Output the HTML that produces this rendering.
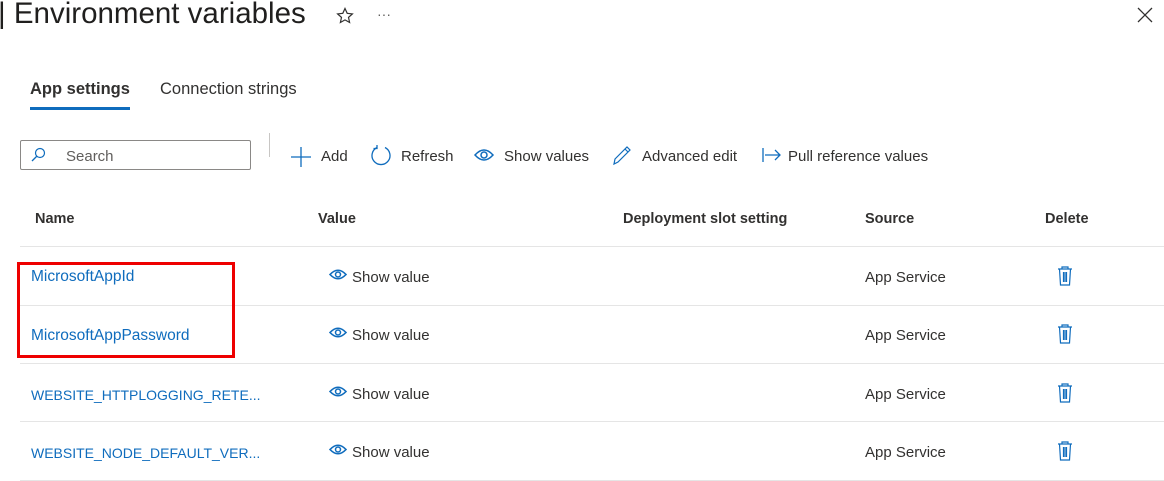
<!DOCTYPE html>
<html><head><meta charset="utf-8"><style>
*{margin:0;padding:0;box-sizing:border-box}
body{width:1164px;height:481px;background:#fff;font-family:"Liberation Sans",sans-serif;color:#323130;position:relative;overflow:hidden;font-size:15px}
.a{position:absolute;white-space:nowrap}
.line{position:absolute;left:20px;width:1144px;height:1px;background:#e5e5e5}
.lnk{color:#0f6cbd;font-size:14px}
.th{font-weight:bold;font-size:14.5px;color:#323130}
svg{position:absolute}
</style></head><body>
<div class="a" style="left:-2px;top:-3px;font-size:29.5px;color:#201f1e">| Environment variables</div>
<svg style="left:336px;top:7px" width="18" height="18" viewBox="0 0 18 18"><path d="M9 1.5l2.2 4.8 5.2.6-3.9 3.5 1.1 5.1L9 12.9 4.4 15.5l1.1-5.1L1.6 6.9l5.2-.6z" fill="none" stroke="#323130" stroke-width="1.2"/></svg>
<div class="a" style="left:377px;top:6px;font-size:14px;color:#605e5c">···</div>
<svg style="left:1137px;top:7px" width="16" height="16"><path d="M1 1L15 15M15 1L1 15" stroke="#323130" stroke-width="1.3"/></svg>
<div class="a" style="left:30px;top:80px;font-size:16.5px;font-weight:bold;color:#323130">App settings</div>
<div style="position:absolute;left:30px;top:107px;width:100px;height:3px;background:#0f6cbd"></div>
<div class="a" style="left:160px;top:80px;font-size:16.5px;color:#323130">Connection strings</div>
<div style="position:absolute;left:20px;top:140px;width:231px;height:30px;border:1px solid #8a8886;border-radius:2px"></div>
<svg style="left:30px;top:147px" width="16" height="16"><circle cx="10" cy="6" r="4.5" fill="none" stroke="#0f6cbd" stroke-width="1.2"/><path d="M7 9L2 14" stroke="#0f6cbd" stroke-width="1.3"/></svg>
<div class="a" style="left:66px;top:148px;color:#605e5c;font-size:15px">Search</div>
<div style="position:absolute;left:269px;top:133px;width:1px;height:24px;background:#c8c6c4"></div>
<svg style="left:290px;top:146px" width="22" height="22"><path d="M11 1v20M1 11h20" stroke="#0f6cbd" stroke-width="1.3"/></svg>
<div class="a" style="left:321px;top:148px;font-size:15px">Add</div>
<svg style="left:370px;top:144px" width="22" height="24"><path d="M7 3.5A9 9 0 1 0 15 3.5" fill="none" stroke="#0f6cbd" stroke-width="1.3"/><path d="M7 1v3.5H3.5" fill="none" stroke="#0f6cbd" stroke-width="1.3"/></svg>
<div class="a" style="left:401px;top:148px;font-size:15px">Refresh</div>
<svg style="left:474px;top:148px" width="20" height="14"><path d="M1 7Q10 -3 19 7Q10 17 1 7Z" fill="none" stroke="#0f6cbd" stroke-width="1.5"/><circle cx="10" cy="7" r="3" fill="none" stroke="#0f6cbd" stroke-width="1.5"/></svg>
<div class="a" style="left:504px;top:148px;font-size:15px">Show values</div>
<svg style="left:611px;top:144px" width="22" height="22"><path d="M3 20l1-5L16 3l3 3L7 18z M14 5l3 3" fill="none" stroke="#0f6cbd" stroke-width="1.2"/></svg>
<div class="a" style="left:642px;top:148px;font-size:15px">Advanced edit</div>
<svg style="left:762px;top:147px" width="20" height="16"><path d="M1 1v14M3 8h15M13 3l5 5-5 5" fill="none" stroke="#0f6cbd" stroke-width="1.3"/></svg>
<div class="a" style="left:788px;top:148px;font-size:15px">Pull reference values</div>
<div class="a th" style="left:35px;top:211px">Name</div>
<div class="a th" style="left:318px;top:211px">Value</div>
<div class="a th" style="left:623px;top:211px">Deployment slot setting</div>
<div class="a th" style="left:865px;top:211px">Source</div>
<div class="a th" style="left:1045px;top:211px">Delete</div>
<div class="line" style="top:246px"></div>
<div class="line" style="top:305px"></div>
<div class="line" style="top:363px"></div>
<div class="line" style="top:421px"></div>
<div class="line" style="top:480px"></div>

<div class="a lnk" style="left:31px;top:268px;font-size:15.5px">MicrosoftAppId</div>
<div class="a lnk" style="left:31px;top:327px;font-size:15.5px">MicrosoftAppPassword</div>
<div class="a lnk" style="left:31px;top:387px">WEBSITE_HTTPLOGGING_RETE...</div>
<div class="a lnk" style="left:31px;top:445px">WEBSITE_NODE_DEFAULT_VER...</div>
<div style="position:absolute;left:17px;top:262px;width:218px;height:96px;border:3px solid #e00"></div>

<div id="rows"></div>
<script>
var ys=[277,335,394,452],h='';
ys.forEach(function(y){
h+='<svg style="left:329px;top:'+(y-9)+'px" width="18" height="13"><path d="M1 6.5Q9 -2 17 6.5Q9 15 1 6.5Z" fill="none" stroke="#0f6cbd" stroke-width="1.6"/><circle cx="9" cy="6.5" r="2.5" fill="none" stroke="#0f6cbd" stroke-width="1.5"/></svg>';
h+='<div class="a" style="left:352px;top:'+(y-8)+'px;font-size:15px">Show value</div>';
h+='<div class="a" style="left:865px;top:'+(y-8)+'px;font-size:15px">App Service</div>';
h+='<svg style="left:1056px;top:'+(y-12)+'px" width="18" height="22"><path d="M2 4h14M6 4V2h6v2M3.5 4l1 16h9l1-16M7.5 7v10M9 7v10M10.5 7v10" fill="none" stroke="#0f6cbd" stroke-width="1.2"/></svg>';
});
document.getElementById('rows').outerHTML=h;
</script>
</body></html>
